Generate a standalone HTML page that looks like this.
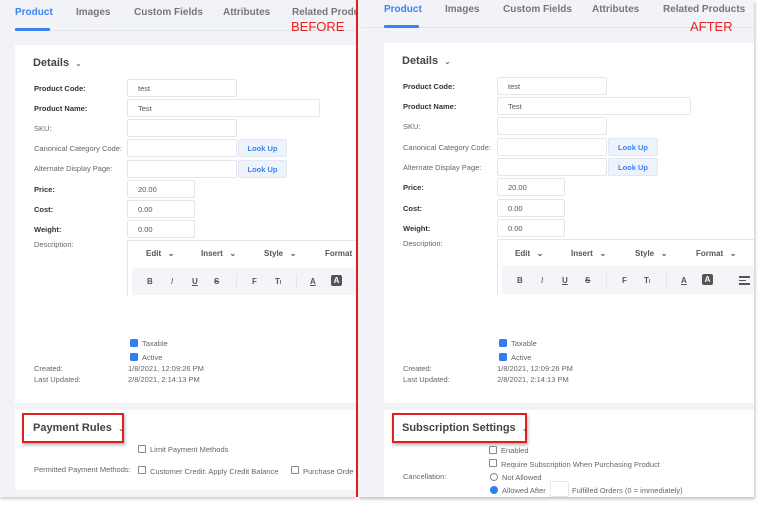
<!DOCTYPE html>
<html><head><style>
*{margin:0;padding:0;box-sizing:border-box}
body{width:768px;height:512px;background:#fff;font-family:"Liberation Sans",sans-serif;position:relative;overflow:hidden;color:#444}
.a{position:absolute;white-space:nowrap}
.tab{font-size:10px;color:#777;font-weight:bold}
.lb{font-size:7.5px;color:#666}
.b{font-weight:bold;color:#333}
.in{position:absolute;height:18px;border:1px solid #e3e6ea;border-radius:2px;background:#fff;font-size:7.5px;color:#555;padding:4px 0 0 10px}
.btn{position:absolute;height:18px;background:#eef3fb;border:1px solid #e0e8f4;border-radius:2px;color:#3b82f6;font-size:7.5px;font-weight:bold;text-align:center;padding-top:4px}
.h{font-size:11px;font-weight:bold;color:#444}
.h span{font-size:8px;margin-left:6px;font-weight:normal}
.cb{position:absolute;width:8px;height:8px;border-radius:1.5px;background:#2f7ff0}
.cbe{position:absolute;width:8px;height:8px;border:1px solid #888;border-radius:1px;background:#fff}
.red{position:absolute;border:2px solid #e02020;box-shadow:1px 2px 3px rgba(0,0,0,.3)}
.tb{font-size:8px;color:#555;font-weight:bold}
.tb i{font-weight:normal}
</style></head><body>
<!-- LEFT -->
<div class="a" style="left:0;top:0;width:356px;height:497px;background:#f1f3f6;box-shadow:0 2px 3px rgba(0,0,0,.2)"></div>
<div class="a tab" style="left:15px;top:7px;color:#3b82f6">Product</div>
<div class="a tab" style="left:76px;top:7px">Images</div>
<div class="a tab" style="left:134px;top:7px">Custom Fields</div>
<div class="a tab" style="left:223px;top:7px">Attributes</div>
<div class="a tab" style="left:292px;top:7px">Related Produc</div>
<div class="a" style="left:15px;top:30px;width:340px;height:1px;background:#e2e5ea"></div>
<div class="a" style="left:15px;top:28px;width:35px;height:3px;background:#3b82f6;border-radius:1px"></div>
<div class="a" style="left:291px;top:19px;font-size:13px;color:#e82020">BEFORE</div>
<div class="a" style="left:15px;top:45px;width:341px;height:358px;background:#fff"></div>
<div class="a h" style="left:33px;top:57px">Details<span>⌄</span></div>
<div class="a lb b" style="left:34px;top:84px">Product Code:</div>
<div class="a lb b" style="left:34px;top:104px">Product Name:</div>
<div class="a lb" style="left:34px;top:124px">SKU:</div>
<div class="a lb" style="left:34px;top:144px">Canonical Category Code:</div>
<div class="a lb" style="left:34px;top:164px">Alternate Display Page:</div>
<div class="a lb b" style="left:34px;top:185px">Price:</div>
<div class="a lb b" style="left:34px;top:205px">Cost:</div>
<div class="a lb b" style="left:34px;top:225px">Weight:</div>
<div class="a lb" style="left:34px;top:240px">Description:</div>
<div class="in" style="left:127px;top:79px;width:110px">test</div>
<div class="in" style="left:127px;top:99px;width:193px">Test</div>
<div class="in" style="left:127px;top:119px;width:110px"></div>
<div class="in" style="left:127px;top:139px;width:110px"></div>
<div class="btn" style="left:238px;top:139px;width:49px">Look Up</div>
<div class="in" style="left:127px;top:160px;width:110px"></div>
<div class="btn" style="left:238px;top:160px;width:49px">Look Up</div>
<div class="in" style="left:127px;top:180px;width:68px">20.00</div>
<div class="in" style="left:127px;top:200px;width:68px">0.00</div>
<div class="in" style="left:127px;top:220px;width:68px">0.00</div>
<div class="a" style="left:127px;top:240px;width:229px;height:55px;border-left:1px solid #e3e6ea;border-top:1px solid #e3e6ea"></div>
<div class="a tb" style="left:146px;top:249px">Edit &nbsp;&nbsp;⌄</div>
<div class="a tb" style="left:201px;top:249px">Insert &nbsp;&nbsp;⌄</div>
<div class="a tb" style="left:264px;top:249px">Style &nbsp;&nbsp;⌄</div>
<div class="a tb" style="left:325px;top:249px">Format</div>
<div class="a" style="left:132px;top:268px;width:224px;height:27px;background:#f3f5f8"></div>
<div class="a tb" style="left:147px;top:277px">B</div>
<div class="a tb" style="left:171px;top:277px"><i>I</i></div>
<div class="a tb" style="left:192px;top:277px"><u>U</u></div>
<div class="a tb" style="left:214px;top:277px"><s>S</s></div>
<div class="a" style="left:236px;top:274px;width:1px;height:14px;background:#e3e6ea"></div>
<div class="a tb" style="left:252px;top:277px">F</div>
<div class="a tb" style="left:275px;top:277px">T<span style="font-size:5px">I</span></div>
<div class="a" style="left:296px;top:274px;width:1px;height:14px;background:#e3e6ea"></div>
<div class="a tb" style="left:310px;top:277px"><u>A</u></div>
<div class="a" style="left:331px;top:275px;width:11px;height:11px;background:#555;border-radius:2px;color:#fff;font-size:8px;font-weight:bold;text-align:center;line-height:11px">A</div>
<div class="cb" style="left:130px;top:339px"></div><div class="a lb" style="left:142px;top:339px">Taxable</div>
<div class="cb" style="left:130px;top:353px"></div><div class="a lb" style="left:142px;top:353px">Active</div>
<div class="a lb" style="left:34px;top:364px">Created:</div><div class="a lb" style="left:128px;top:364px">1/8/2021, 12:09:26 PM</div>
<div class="a lb" style="left:34px;top:375px">Last Updated:</div><div class="a lb" style="left:128px;top:375px">2/8/2021, 2:14:13 PM</div>
<div class="a" style="left:15px;top:410px;width:341px;height:80px;background:#fff"></div>
<div class="red" style="left:22px;top:413px;width:102px;height:30px"></div>
<div class="a h" style="left:33px;top:422px">Payment Rules<span>⌄</span></div>
<div class="cbe" style="left:138px;top:445px"></div><div class="a lb" style="left:150px;top:445px">Limit Payment Methods</div>
<div class="a lb" style="left:34px;top:465px">Permitted Payment Methods:</div>
<div class="cbe" style="left:138px;top:466px"></div><div class="a lb" style="left:150px;top:467px">Customer Credit: Apply Credit Balance</div>
<div class="cbe" style="left:291px;top:466px"></div><div class="a lb" style="left:303px;top:467px">Purchase Orde</div>
<div class="a" style="left:356px;top:0;width:2px;height:497px;background:#e02020"></div>
<!-- RIGHT -->
<div class="a" style="left:358px;top:0;width:396px;height:497px;background:#f1f3f6;box-shadow:1px 2px 3px rgba(0,0,0,.25)"></div>
<div class="a tab" style="left:384px;top:4px;color:#3b82f6">Product</div>
<div class="a tab" style="left:445px;top:4px">Images</div>
<div class="a tab" style="left:503px;top:4px">Custom Fields</div>
<div class="a tab" style="left:592px;top:4px">Attributes</div>
<div class="a tab" style="left:663px;top:4px">Related Products</div>
<div class="a" style="left:362px;top:27px;width:392px;height:1px;background:#e2e5ea"></div>
<div class="a" style="left:384px;top:25px;width:35px;height:3px;background:#3b82f6;border-radius:1px"></div>
<div class="a" style="left:690px;top:19px;font-size:13px;color:#e82020">AFTER</div>
<div class="a" style="left:384px;top:43px;width:370px;height:360px;background:#fff"></div>
<div class="a h" style="left:402px;top:55px">Details<span>⌄</span></div>
<div class="a lb b" style="left:403px;top:82px">Product Code:</div>
<div class="a lb b" style="left:403px;top:102px">Product Name:</div>
<div class="a lb" style="left:403px;top:122px">SKU:</div>
<div class="a lb" style="left:403px;top:143px">Canonical Category Code:</div>
<div class="a lb" style="left:403px;top:163px">Alternate Display Page:</div>
<div class="a lb b" style="left:403px;top:183px">Price:</div>
<div class="a lb b" style="left:403px;top:204px">Cost:</div>
<div class="a lb b" style="left:403px;top:224px">Weight:</div>
<div class="a lb" style="left:403px;top:239px">Description:</div>
<div class="in" style="left:497px;top:77px;width:110px">test</div>
<div class="in" style="left:497px;top:97px;width:194px">Test</div>
<div class="in" style="left:497px;top:117px;width:110px"></div>
<div class="in" style="left:497px;top:138px;width:110px"></div>
<div class="btn" style="left:608px;top:138px;width:50px">Look Up</div>
<div class="in" style="left:497px;top:158px;width:110px"></div>
<div class="btn" style="left:608px;top:158px;width:50px">Look Up</div>
<div class="in" style="left:497px;top:178px;width:68px">20.00</div>
<div class="in" style="left:497px;top:199px;width:68px">0.00</div>
<div class="in" style="left:497px;top:219px;width:68px">0.00</div>
<div class="a" style="left:497px;top:239px;width:257px;height:56px;border-left:1px solid #e3e6ea;border-top:1px solid #e3e6ea"></div>
<div class="a tb" style="left:515px;top:249px">Edit &nbsp;&nbsp;⌄</div>
<div class="a tb" style="left:571px;top:249px">Insert &nbsp;&nbsp;⌄</div>
<div class="a tb" style="left:635px;top:249px">Style &nbsp;&nbsp;⌄</div>
<div class="a tb" style="left:696px;top:249px">Format &nbsp;&nbsp;⌄</div>
<div class="a" style="left:502px;top:266px;width:252px;height:28px;background:#f3f5f8"></div>
<div class="a tb" style="left:517px;top:276px">B</div>
<div class="a tb" style="left:541px;top:276px"><i>I</i></div>
<div class="a tb" style="left:562px;top:276px"><u>U</u></div>
<div class="a tb" style="left:585px;top:276px"><s>S</s></div>
<div class="a" style="left:606px;top:273px;width:1px;height:14px;background:#e3e6ea"></div>
<div class="a tb" style="left:622px;top:276px">F</div>
<div class="a tb" style="left:644px;top:276px">T<span style="font-size:5px">I</span></div>
<div class="a" style="left:666px;top:273px;width:1px;height:14px;background:#e3e6ea"></div>
<div class="a tb" style="left:681px;top:276px"><u>A</u></div>
<div class="a" style="left:702px;top:274px;width:11px;height:11px;background:#555;border-radius:2px;color:#fff;font-size:8px;font-weight:bold;text-align:center;line-height:11px">A</div>
<div class="a" style="left:739px;top:276px;width:11px;height:1.5px;background:#555"></div>
<div class="a" style="left:739px;top:279.5px;width:7px;height:1.5px;background:#555"></div>
<div class="a" style="left:739px;top:283px;width:11px;height:1.5px;background:#555"></div>
<div class="cb" style="left:499px;top:339px"></div><div class="a lb" style="left:511px;top:339px">Taxable</div>
<div class="cb" style="left:499px;top:353px"></div><div class="a lb" style="left:511px;top:353px">Active</div>
<div class="a lb" style="left:403px;top:364px">Created:</div><div class="a lb" style="left:497px;top:364px">1/8/2021, 12:09:26 PM</div>
<div class="a lb" style="left:403px;top:375px">Last Updated:</div><div class="a lb" style="left:497px;top:375px">2/8/2021, 2:14:13 PM</div>
<div class="a" style="left:384px;top:410px;width:370px;height:87px;background:#fff"></div>
<div class="red" style="left:392px;top:413px;width:135px;height:30px"></div>
<div class="a h" style="left:402px;top:422px">Subscription Settings<span>⌄</span></div>
<div class="cbe" style="left:489px;top:446px"></div><div class="a lb" style="left:501px;top:446px">Enabled</div>
<div class="cbe" style="left:489px;top:459px"></div><div class="a lb" style="left:501px;top:460px">Require Subscription When Purchasing Product</div>
<div class="a lb" style="left:403px;top:472px">Cancellation:</div>
<div class="a" style="left:490px;top:473px;width:8px;height:8px;border:1px solid #888;border-radius:50%"></div><div class="a lb" style="left:502px;top:473px">Not Allowed</div>
<div class="a" style="left:490px;top:486px;width:8px;height:8px;border-radius:50%;background:#2f7ff0"></div><div class="a lb" style="left:502px;top:486px">Allowed After</div>
<div class="in" style="left:550px;top:481px;width:19px;height:16px"></div>
<div class="a lb" style="left:572px;top:486px">Fulfilled Orders (0 = immediately)</div>
</body></html>
